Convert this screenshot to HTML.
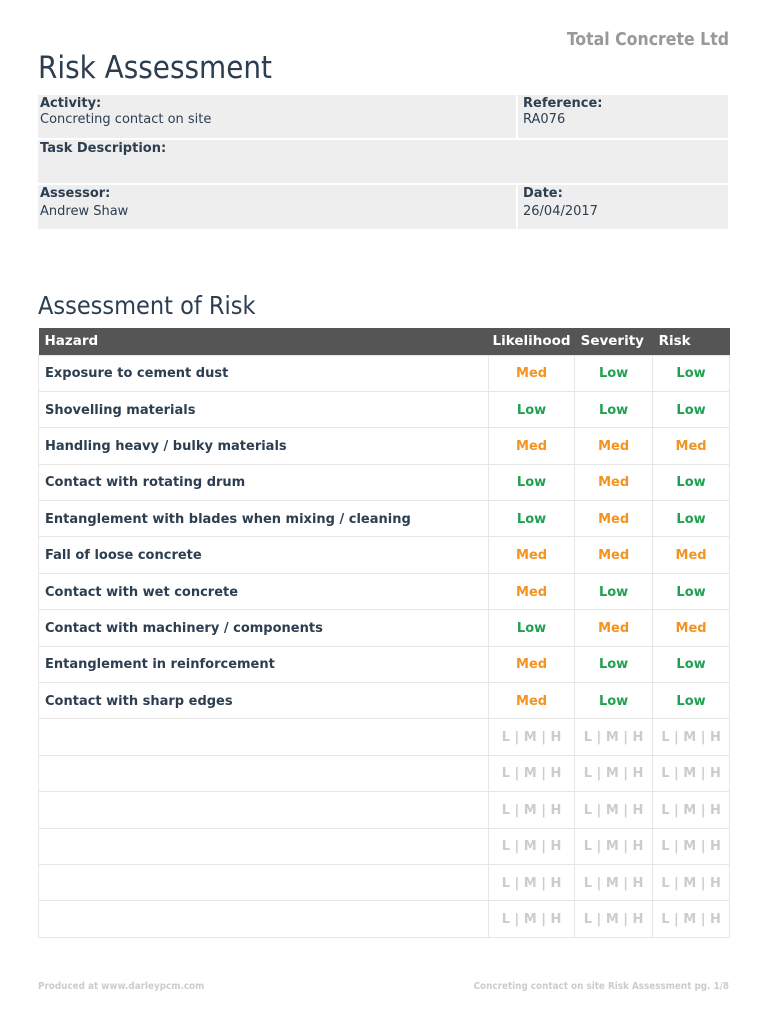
<!DOCTYPE html>
<html><head><meta charset="utf-8"><style>
*{margin:0;padding:0;box-sizing:border-box}
body{width:768px;height:1024px;background:#fff;font-family:"DejaVu Sans","Liberation Sans",sans-serif;color:#2c3e50;position:relative}
.abs{position:absolute}
.co{right:39px;top:30px;font-weight:bold;color:#999;font-family:"DejaVu Sans Condensed","DejaVu Sans",sans-serif;font-size:17.5px}
.t1{left:38px;top:50px;font-size:31px;font-weight:normal;color:#2c3e50;font-family:"DejaVu Sans Condensed","DejaVu Sans",sans-serif}
.cell{position:absolute;background:#eeeeee;padding:0 0 0 2px;font-size:13px;line-height:16px}
.cell b{display:block}
.t2{left:38px;top:291px;font-size:25px;color:#2c3e50;font-family:"DejaVu Sans Condensed","DejaVu Sans",sans-serif}
table{position:absolute;left:38px;top:328px;width:692px;border-collapse:collapse;font-size:13px;font-weight:bold}
th{background:#555;color:#fff;height:27px;text-align:left;padding:0 6px;font-size:13.5px}
td{border:1px solid #e6e6e6;height:36.4px;padding:0 6px;text-align:center;padding-top:1px}
td:first-child{text-align:left}
.m{color:#f39422}.l{color:#20a050}.e{color:#ccc;font-weight:bold}
.ft{top:981px;font-size:9.8px;font-weight:bold;color:#ccc;font-family:"DejaVu Sans Condensed","DejaVu Sans",sans-serif}
</style></head><body>
<div class="abs co">Total Concrete Ltd</div>
<div class="abs t1">Risk Assessment</div>
<div class="cell" style="left:38px;top:95px;width:478px;height:43px;padding-top:1px"><b>Activity:</b>Concreting contact on site</div>
<div class="cell" style="left:518px;top:95px;width:210px;height:43px;padding-top:1px;padding-left:5px"><b>Reference:</b>RA076</div>
<div class="cell" style="left:38px;top:140px;width:690px;height:43px;padding-top:1px"><b>Task Description:</b></div>
<div class="cell" style="left:38px;top:185px;width:478px;height:44px;padding-top:1px"><b>Assessor:</b><span style="display:block;margin-top:2px">Andrew Shaw</span></div>
<div class="cell" style="left:518px;top:185px;width:210px;height:44px;padding-top:1px;padding-left:5px"><b>Date:</b><span style="display:block;margin-top:2px">26/04/2017</span></div>
<div class="abs t2">Assessment of Risk</div>
<table>
<tr><th style="width:450px">Hazard</th><th style="width:85px;padding:0 4px">Likelihood</th><th style="width:78px;padding:0 6px">Severity</th><th style="padding:0 6px">Risk</th></tr>
<tr><td>Exposure to cement dust</td><td class="m">Med</td><td class="l">Low</td><td class="l">Low</td></tr>
<tr><td>Shovelling materials</td><td class="l">Low</td><td class="l">Low</td><td class="l">Low</td></tr>
<tr><td>Handling heavy / bulky materials</td><td class="m">Med</td><td class="m">Med</td><td class="m">Med</td></tr>
<tr><td>Contact with rotating drum</td><td class="l">Low</td><td class="m">Med</td><td class="l">Low</td></tr>
<tr><td>Entanglement with blades when mixing / cleaning</td><td class="l">Low</td><td class="m">Med</td><td class="l">Low</td></tr>
<tr><td>Fall of loose concrete</td><td class="m">Med</td><td class="m">Med</td><td class="m">Med</td></tr>
<tr><td>Contact with wet concrete</td><td class="m">Med</td><td class="l">Low</td><td class="l">Low</td></tr>
<tr><td>Contact with machinery / components</td><td class="l">Low</td><td class="m">Med</td><td class="m">Med</td></tr>
<tr><td>Entanglement in reinforcement</td><td class="m">Med</td><td class="l">Low</td><td class="l">Low</td></tr>
<tr><td>Contact with sharp edges</td><td class="m">Med</td><td class="l">Low</td><td class="l">Low</td></tr>
<tr><td></td><td class="e">L | M | H</td><td class="e">L | M | H</td><td class="e">L | M | H</td></tr>
<tr><td></td><td class="e">L | M | H</td><td class="e">L | M | H</td><td class="e">L | M | H</td></tr>
<tr><td></td><td class="e">L | M | H</td><td class="e">L | M | H</td><td class="e">L | M | H</td></tr>
<tr><td></td><td class="e">L | M | H</td><td class="e">L | M | H</td><td class="e">L | M | H</td></tr>
<tr><td></td><td class="e">L | M | H</td><td class="e">L | M | H</td><td class="e">L | M | H</td></tr>
<tr><td></td><td class="e">L | M | H</td><td class="e">L | M | H</td><td class="e">L | M | H</td></tr>
</table>
<div class="abs ft" style="left:38px">Produced at www.darleypcm.com</div>
<div class="abs ft" style="right:39px">Concreting contact on site Risk Assessment pg. 1/8</div>
</body></html>
